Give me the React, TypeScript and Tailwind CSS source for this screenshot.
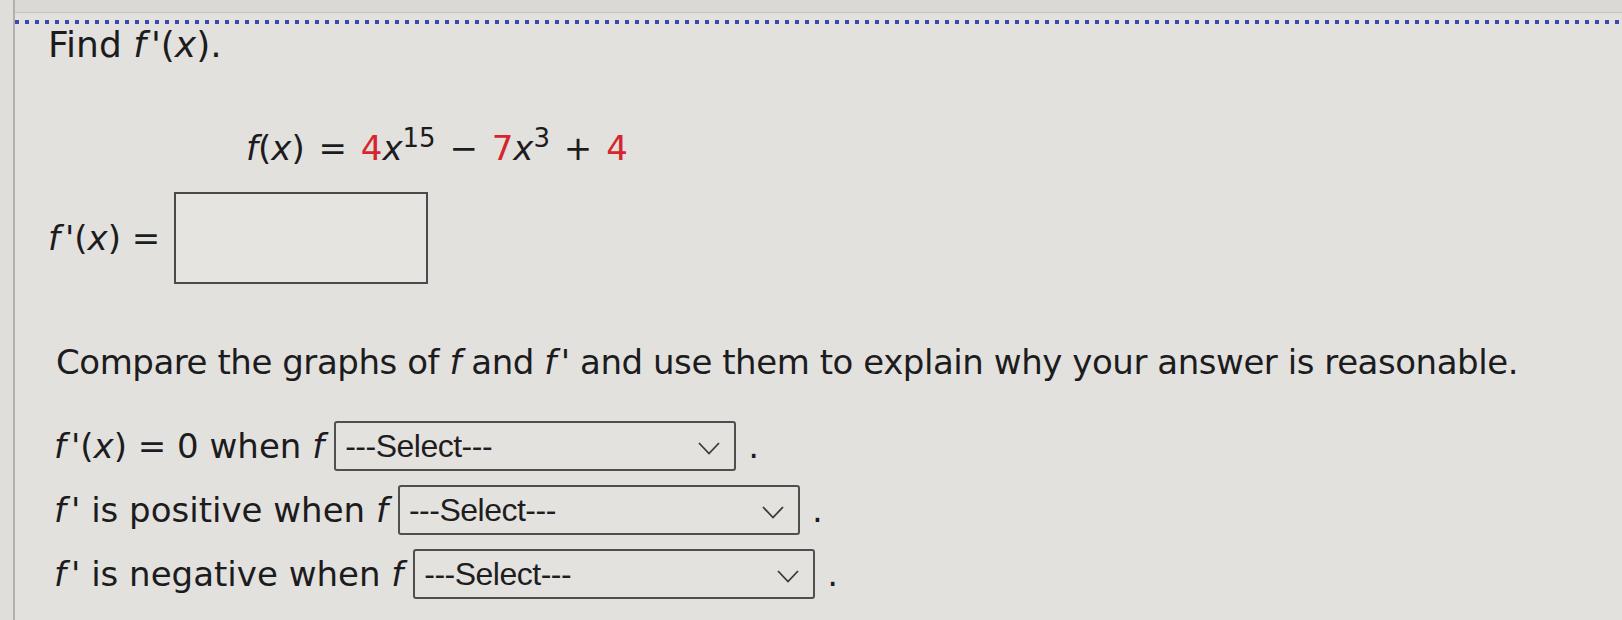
import type { ReactNode } from 'react'

const I = ({ children }: { children: ReactNode }) => <i className="italic">{children}</i>

// f with the prime set a little off, as the page does
const FPrime = () => (
  <>
    <I>f</I>
    <span className="ml-[5px]">'</span>
  </>
)

function Select() {
  return (
    <div className="flex h-[50px] w-[402px] items-center justify-between rounded-[3px] border-2 border-[#4f4f4f] bg-[#e4e2de] pl-[9px] pr-[14px]">
      <span className="font-['Liberation_Sans',Arial,sans-serif] text-[32px] tracking-[-0.5px] text-[#1e1e1e]">
        ---Select---
      </span>
      <svg width="22" height="13" viewBox="0 0 22 13" className="mt-[4px]">
        <polyline points="1,1 11,11.5 21,1" fill="none" stroke="#3a3a3a" strokeWidth="1.8" />
      </svg>
    </div>
  )
}

function Row({ children }: { children: ReactNode }) {
  return (
    <div className="flex h-[52px] items-center gap-[10px]">
      <span>{children}</span>
      <Select />
      <span className="self-end pl-[2px]">.</span>
    </div>
  )
}

export default function App() {
  return (
    <div className="h-[620px] w-[1622px] overflow-hidden bg-[#e0deda] font-['DejaVu_Sans',Verdana,sans-serif] text-[#1c1c1e]">
      <div className="ml-[13px] h-[620px] border-l-2 border-[#b3b1ad] bg-[#e3e1dd]">
        <div className="h-[13px] border-b border-[#c4c2be] bg-[#dbd9d5]" />
        <div className="mt-[7px] h-[4px] bg-[repeating-linear-gradient(90deg,#3a49b0_0_4px,transparent_4px_10px)]" />

        <div className="pl-[33px]">
          <div className="mt-[1px] text-[36px] leading-[40px]">
            Find <FPrime />(<I>x</I>).
          </div>

          <div className="mt-[61px] pl-[198px] text-[34px] leading-[44px] [word-spacing:3px]">
            <I>f</I>(<I>x</I>) = <span className="text-[#d5262d]">4</span>
            <I>x</I>
            <sup className="text-[26px]">15</sup> &minus; <span className="text-[#d5262d]">7</span>
            <I>x</I>
            <sup className="text-[26px]">3</sup> + <span className="text-[#d5262d]">4</span>
          </div>

          <div className="mt-[22px] flex items-center gap-[14px]">
            <span className="text-[34px]">
              <FPrime />(<I>x</I>) =
            </span>
            <div className="h-[92px] w-[254px] border-2 border-[#4a4a4a] bg-[#e6e4e0]" />
          </div>

          <div className="mt-[56px] pl-[8px] text-[34px] leading-[44px] tracking-[-0.45px]">
            Compare the graphs of <I>f</I> and <FPrime /> and use them to explain why your answer is
            reasonable.
          </div>

          <div className="mt-[36px] flex flex-col gap-[12px] pl-[6px] text-[34px]">
            <Row>
              <FPrime />(<I>x</I>) = 0 when <I>f</I>
            </Row>
            <Row>
              <FPrime /> is positive when <I>f</I>
            </Row>
            <Row>
              <FPrime /> is negative when <I>f</I>
            </Row>
          </div>
        </div>
      </div>
    </div>
  )
}
